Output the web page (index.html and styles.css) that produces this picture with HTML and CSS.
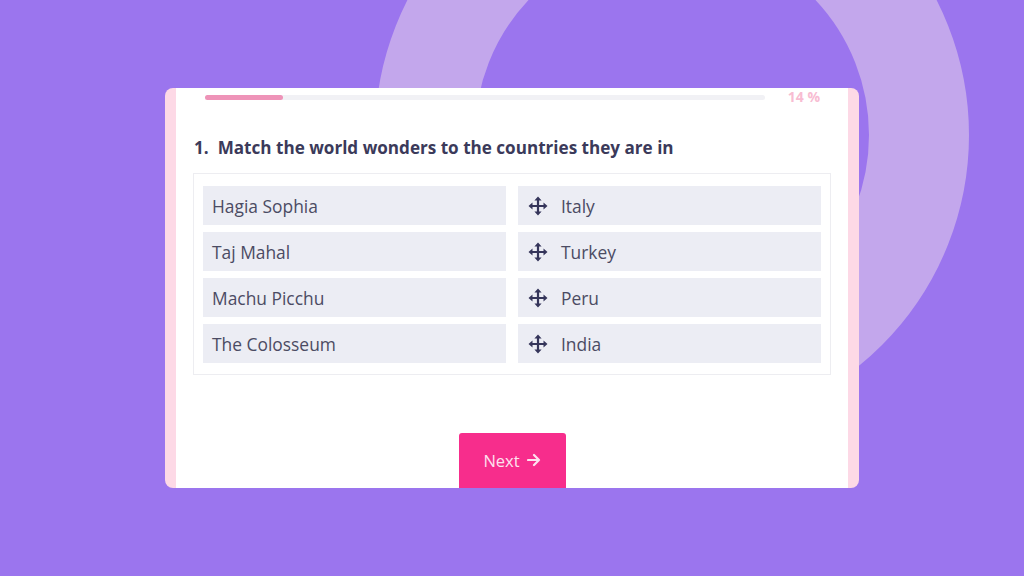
FILE: index.html
```html
<!DOCTYPE html>
<html lang="en">
<head>
<meta charset="utf-8">
<title>Quiz</title>
<link rel="stylesheet" href="styles.css">
</head>
<body>
<div class="ring"></div>
<main class="stage">
  <section class="card">
    <div class="panel">
      <div class="progress">
        <div class="track"><div class="fill" style="width:14%"></div></div>
        <span class="pct">14 %</span>
      </div>
      <h1 class="question"><span class="num">1.</span>Match the world wonders to the countries they are in</h1>
      <div class="match">
        <div class="item">Hagia Sophia</div>
        <div class="item drag"><svg class="move" viewBox="0 0 20 20"><path d="M10 3v14M3 10h14" stroke="currentColor" stroke-width="2.2" fill="none"/><path d="M10 0.5l3.6 4h-7.2zM10 19.5l3.6-4h-7.2zM0.5 10l4-3.6v7.2zM19.5 10l-4-3.6v7.2z" fill="currentColor"/></svg><span>Italy</span></div>
        <div class="item">Taj Mahal</div>
        <div class="item drag"><svg class="move" viewBox="0 0 20 20"><path d="M10 3v14M3 10h14" stroke="currentColor" stroke-width="2.2" fill="none"/><path d="M10 0.5l3.6 4h-7.2zM10 19.5l3.6-4h-7.2zM0.5 10l4-3.6v7.2zM19.5 10l-4-3.6v7.2z" fill="currentColor"/></svg><span>Turkey</span></div>
        <div class="item">Machu Picchu</div>
        <div class="item drag"><svg class="move" viewBox="0 0 20 20"><path d="M10 3v14M3 10h14" stroke="currentColor" stroke-width="2.2" fill="none"/><path d="M10 0.5l3.6 4h-7.2zM10 19.5l3.6-4h-7.2zM0.5 10l4-3.6v7.2zM19.5 10l-4-3.6v7.2z" fill="currentColor"/></svg><span>Peru</span></div>
        <div class="item">The Colosseum</div>
        <div class="item drag"><svg class="move" viewBox="0 0 20 20"><path d="M10 3v14M3 10h14" stroke="currentColor" stroke-width="2.2" fill="none"/><path d="M10 0.5l3.6 4h-7.2zM10 19.5l3.6-4h-7.2zM0.5 10l4-3.6v7.2zM19.5 10l-4-3.6v7.2z" fill="currentColor"/></svg><span>India</span></div>
      </div>
      <div class="actions">
        <button class="next">Next <svg class="arrow" viewBox="0 0 14 14"><path d="M1 7h11M7 2l5 5-5 5" stroke="currentColor" stroke-width="2.2" fill="none" stroke-linecap="round" stroke-linejoin="round"/></svg></button>
      </div>
    </div>
  </section>
</main>
</body>
</html>
```

FILE: styles.css
```css
* { box-sizing: border-box; }
html, body { margin: 0; padding: 0; }
body {
  width: 1024px;
  height: 576px;
  overflow: hidden;
  background: #9b75ee;
  font-family: "Open Sans", "Noto Sans", sans-serif;
  position: relative;
}
.ring {
  position: absolute;
  left: 375px;
  top: -162px;
  width: 594px;
  height: 594px;
  border-radius: 50%;
  border: 100px solid #c3a7ec;
}
.stage {
  position: relative;
  height: 576px;
  display: flex;
  align-items: center;
  justify-content: center;
}
.card {
  width: 694px;
  height: 400px;
  background: #fdd9e6;
  border-radius: 8px;
  padding: 0 11px;
  overflow: hidden;
}
.panel {
  background: #fff;
  height: 100%;
  padding: 0 17px;
  overflow: hidden;
}
.progress {
  display: flex;
  align-items: center;
  height: 18px;
  padding: 0 11px 0 12px;
}
.track {
  flex: 1;
  height: 5px;
  border-radius: 3px;
  background: #f1f1f5;
}
.fill {
  height: 100%;
  border-radius: 3px;
  background: #ee93b8;
}
.pct {
  margin-left: 23px;
  font-size: 14px;
  font-weight: 700;
  color: #f8bcd2;
  line-height: 14px;
}
.question {
  margin: 30px 0 0 1px;
  font-size: 17.1px;
  line-height: 24px;
  font-weight: 700;
  color: #3b3a5a;
}
.num { margin-right: 9px; }
.match {
  margin-top: 13px;
  border: 1px solid #ededf1;
  padding: 12px 9px 11px;
  display: grid;
  grid-template-columns: 1fr 1fr;
  column-gap: 12px;
  row-gap: 7px;
}
.item {
  height: 39px;
  background: #ecedf4;
  display: flex;
  align-items: center;
  padding-left: 9px;
  font-size: 17.4px;
  color: #4b4b63;
}
.drag { padding-left: 10px; }
.move {
  width: 20px;
  height: 20px;
  color: #35355a;
  margin-right: 13px;
  flex: none;
}
.actions {
  display: flex;
  justify-content: center;
  margin-top: 58px;
}
.next {
  width: 107px;
  height: 62px;
  border: none;
  border-radius: 3px;
  background: #f72d8c;
  color: #fde2ef;
  font-family: inherit;
  font-size: 16.5px;
  padding: 0 0 8px;
  display: flex;
  align-items: center;
  justify-content: center;
  gap: 7px;
}
.arrow { width: 14px; height: 14px; }
```
